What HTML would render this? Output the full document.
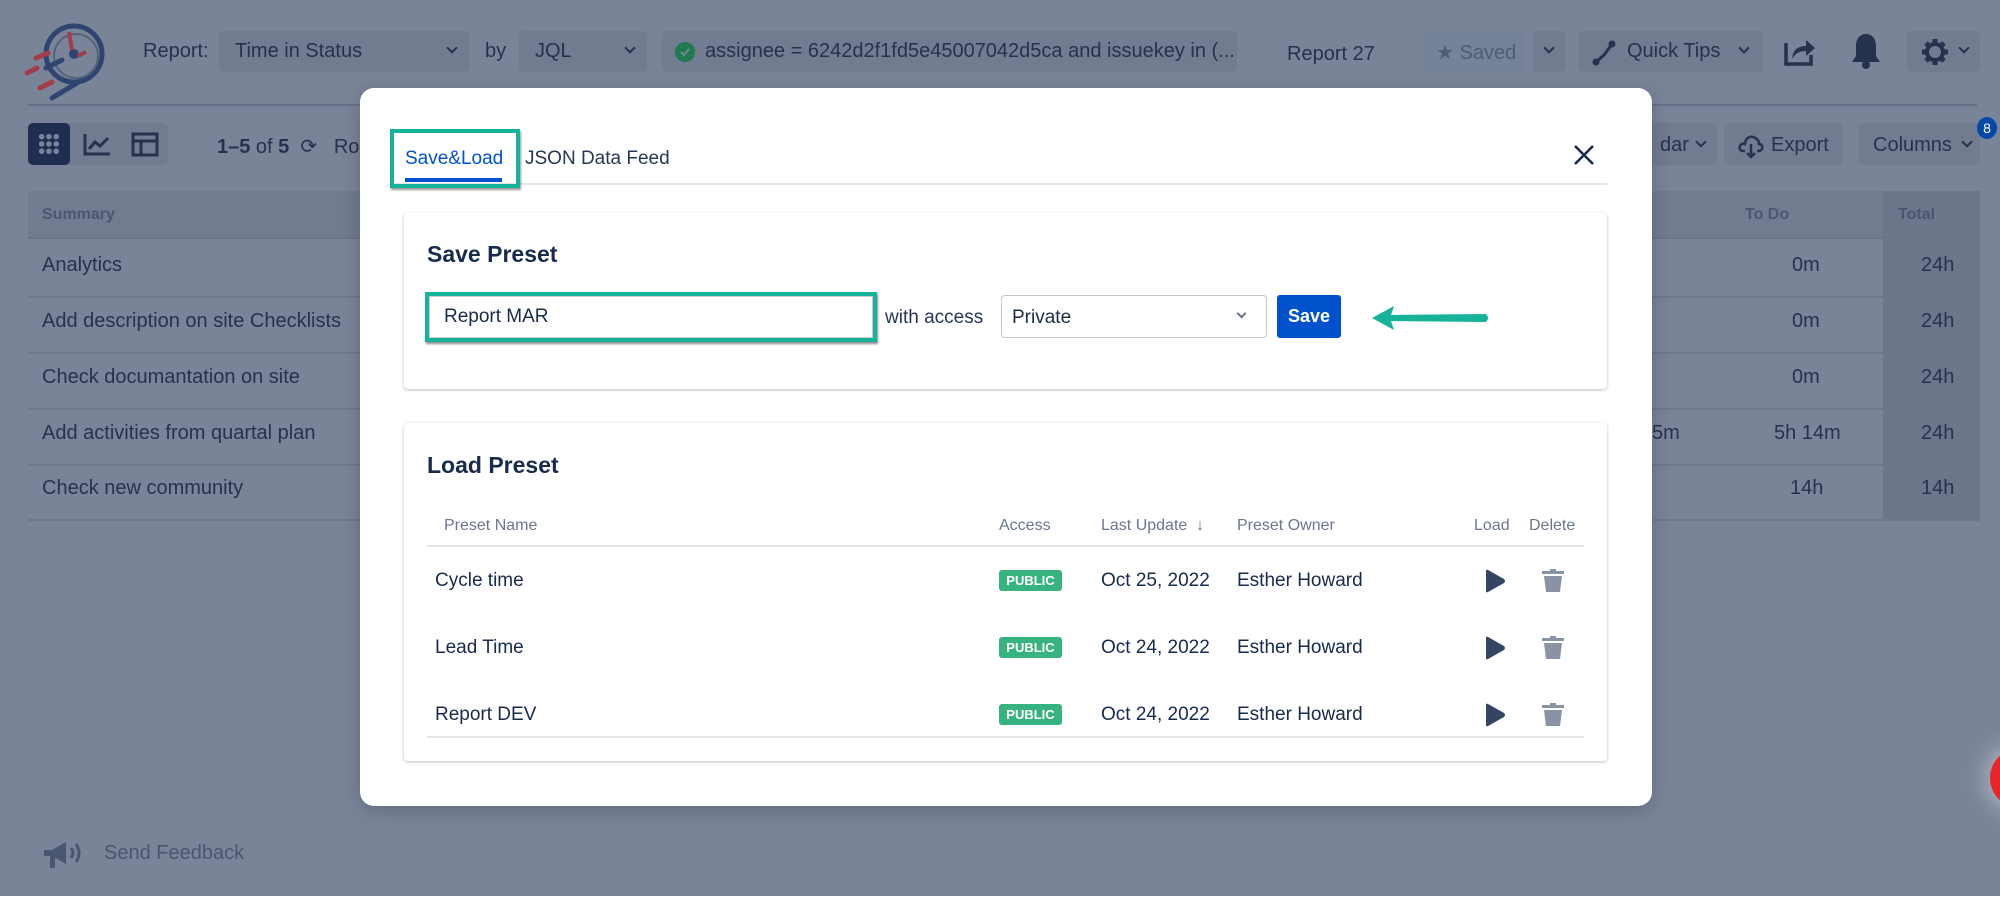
<!DOCTYPE html>
<html><head><meta charset="utf-8">
<style>
*{box-sizing:border-box;margin:0;padding:0}
body{width:2000px;height:903px;overflow:hidden;background:#fff;font-family:"Liberation Sans",Arial,sans-serif;position:relative}
.bg{position:absolute;left:0;top:0;width:2000px;height:896px;background:#7a8499}
.a{position:absolute}
.t{color:#25314d;font-size:20px;white-space:nowrap}
.box{position:absolute;background:#717c91;border-radius:5px}
.chev{display:inline-block;width:8px;height:8px;border-right:2.5px solid #25314d;border-bottom:2.5px solid #25314d;transform:rotate(45deg)}
.modal{position:absolute;left:360px;top:88px;width:1292px;height:718px;background:#fff;border-radius:14px;box-shadow:0 4px 20px rgba(0,0,0,.2)}
.card{position:absolute;background:#fff;border-radius:4px;box-shadow:0 1px 3px rgba(0,0,0,.25)}
.m{position:absolute;color:#172b4d;white-space:nowrap}
.hd{position:absolute;color:#6b778c;font-size:16px;white-space:nowrap}
.badge{position:absolute;left:639px;width:63px;height:21px;background:#36b37e;color:#fff;font-size:13px;font-weight:bold;border-radius:3px;text-align:center;line-height:21px}
</style></head><body>
<div class="bg"></div>
<svg class="a" style="left:22px;top:18px" width="85" height="85" viewBox="0 0 85 85">
<circle cx="52" cy="36" r="28" fill="none" stroke="#2f4470" stroke-width="5"/>
<circle cx="54" cy="38" r="22" fill="none" stroke="#55627a" stroke-width="2"/>
<circle cx="52" cy="36" r="5" fill="#2f4470"/>
<line x1="50" y1="32" x2="47" y2="14" stroke="#a33c4a" stroke-width="4"/>
<line x1="56" y1="38" x2="64" y2="34" stroke="#a33c4a" stroke-width="4"/>
<line x1="5" y1="55" x2="15" y2="50" stroke="#a33c4a" stroke-width="5" stroke-linecap="round"/>
<line x1="14" y1="40" x2="26" y2="35" stroke="#a33c4a" stroke-width="5" stroke-linecap="round"/>
<line x1="18" y1="70" x2="30" y2="64" stroke="#a33c4a" stroke-width="5" stroke-linecap="round"/>
<line x1="24" y1="50" x2="40" y2="42" stroke="#2f4470" stroke-width="5" stroke-linecap="round"/>
<line x1="30" y1="80" x2="55" y2="65" stroke="#2f4470" stroke-width="5" stroke-linecap="round"/>
</svg>
<div class="a t" style="left:143px;top:40px">Report:</div>
<div class="box" style="left:219px;top:31px;width:251px;height:41px"></div>
<div class="a t" style="left:235px;top:40px">Time in Status</div>
<div class="a chev" style="left:448px;top:44px"></div>
<div class="a t" style="left:485px;top:40px">by</div>
<div class="box" style="left:519px;top:31px;width:128px;height:41px"></div>
<div class="a t" style="left:535px;top:40px">JQL</div>
<div class="a chev" style="left:626px;top:44px"></div>
<div class="box" style="left:662px;top:31px;width:575px;height:41px"></div>
<svg class="a" style="left:675px;top:42px" width="20" height="20"><circle cx="10" cy="10" r="10" fill="#1f7a4f"/><path d="M6 10 L9 13 L14 7" stroke="#7a8499" stroke-width="2" fill="none"/></svg>
<div class="a t" style="left:705px;top:40px">assignee = 6242d2f1fd5e45007042d5ca and issuekey in (...</div>
<div class="a t" style="left:1287px;top:43px">Report 27</div>
<div class="box" style="left:1422px;top:31px;width:102px;height:41px;background:#76819a"></div>
<div class="a t" style="left:1436px;top:40px;color:#4f5b74">★ Saved</div>
<div class="box" style="left:1533px;top:31px;width:33px;height:41px"></div>
<div class="a chev" style="left:1545px;top:44px"></div>
<div class="box" style="left:1578px;top:31px;width:185px;height:41px"></div>
<svg class="a" style="left:1592px;top:38px" width="26" height="28"><path d="M4 24 L12 17 L20 6" stroke="#25314d" stroke-width="3" fill="none"/><circle cx="4" cy="24" r="3.5" fill="#25314d"/><circle cx="20" cy="6" r="3.5" fill="#25314d"/></svg>
<div class="a t" style="left:1627px;top:40px">Quick Tips</div>
<div class="a chev" style="left:1740px;top:44px"></div>
<svg class="a" style="left:1783px;top:35px" width="34" height="32"><path d="M3 8 V29 H28 V20" stroke="#25314d" stroke-width="3.5" fill="none"/><path d="M9 24 C10 14 16 11 23 11 V5 L32 13 L23 21 V16 C17 16 12 18 9 24Z" fill="#25314d"/></svg>
<svg class="a" style="left:1850px;top:32px" width="32" height="40"><path d="M16 2 C9 2 6 8 6 14 V24 L2 30 H30 L26 24 V14 C26 8 23 2 16 2Z" fill="#25314d"/><circle cx="16" cy="33" r="4" fill="#25314d"/></svg>
<div class="box" style="left:1907px;top:31px;width:73px;height:41px"></div>
<svg class="a" style="left:1921px;top:38px" width="28" height="28" viewBox="0 0 28 28"><circle cx="14" cy="14" r="8" fill="none" stroke="#25314d" stroke-width="4"/><g stroke="#25314d" stroke-width="5"><line x1="14" y1="1" x2="14" y2="6"/><line x1="14" y1="22" x2="14" y2="27"/><line x1="1" y1="14" x2="6" y2="14"/><line x1="22" y1="14" x2="27" y2="14"/><line x1="5" y1="5" x2="8" y2="8"/><line x1="20" y1="20" x2="23" y2="23"/><line x1="5" y1="23" x2="8" y2="20"/><line x1="20" y1="8" x2="23" y2="5"/></g></svg>
<div class="a chev" style="left:1960px;top:44px"></div>
<div class="a" style="left:28px;top:104px;width:1949px;height:2px;background:#66718a"></div>
<div class="box" style="left:28px;top:123px;width:140px;height:42px"></div>
<div class="a" style="left:28px;top:123px;width:42px;height:42px;background:#1e2d50;border-radius:5px"></div>
<div class="a" style="left:38px;top:133px;width:22px;height:22px;background:radial-gradient(circle,#7a8499 2.5px,transparent 3px) 0 0/7.3px 7.3px"></div>
<svg class="a" style="left:83px;top:132px" width="28" height="24"><path d="M2 2 V22 H27 M6 17 L12 10 L17 14 L25 6" stroke="#25314d" stroke-width="3" fill="none"/></svg>
<svg class="a" style="left:131px;top:132px" width="28" height="25"><rect x="2" y="2" width="24" height="21" stroke="#25314d" stroke-width="3" fill="none"/><path d="M2 9 H26 M10 9 V23" stroke="#25314d" stroke-width="3"/></svg>
<div class="a t" style="left:217px;top:134px"><b>1–5</b> of <b>5</b> &nbsp;⟳ &nbsp;&nbsp;Ro</div>
<div class="box" style="left:1650px;top:123px;width:67px;height:42px"></div>
<div class="a t" style="left:1660px;top:134px">dar</div>
<div class="a chev" style="left:1697px;top:138px"></div>
<div class="box" style="left:1724px;top:123px;width:119px;height:42px"></div>
<svg class="a" style="left:1738px;top:133px" width="26" height="26"><path d="M7 18 H5 C2 18 1 15 2 13 C3 11 5 10 7 11 C7 6 11 3 15 4 C19 5 21 8 21 11 C24 11 25 14 24 16 C23 18 21 18 19 18" stroke="#25314d" stroke-width="2.5" fill="none"/><path d="M13 11 V24 M9 20 L13 24 L17 20" stroke="#25314d" stroke-width="2.5" fill="none"/></svg>
<div class="a t" style="left:1771px;top:134px">Export</div>
<div class="box" style="left:1858px;top:123px;width:122px;height:42px"></div>
<div class="a t" style="left:1873px;top:134px">Columns</div>
<div class="a chev" style="left:1963px;top:138px"></div>
<div class="a" style="left:1977px;top:117px;width:20px;height:22px;border-radius:50%;background:#0747a6;color:#fff;font-size:14px;text-align:center;line-height:22px">8</div>
<div class="a" style="left:28px;top:191px;width:1855px;height:48px;background:#717c91;border-bottom:2px solid #6a7589"></div>
<div class="a" style="left:1883px;top:191px;width:97px;height:329px;background:#6b768b"></div>
<div class="a t" style="left:42px;top:206px;font-size:16px;font-weight:bold;color:#4a5670">Summary</div>
<div class="a t" style="left:1745px;top:206px;font-size:16px;font-weight:bold;color:#4a5670">To Do</div>
<div class="a t" style="left:1898px;top:206px;font-size:16px;font-weight:bold;color:#4a5670">Total</div>
<div class="a" style="left:28px;top:296px;width:1855px;height:2px;background:#6d788d"></div>
<div class="a" style="left:28px;top:352px;width:1855px;height:2px;background:#6d788d"></div>
<div class="a" style="left:28px;top:408px;width:1855px;height:2px;background:#6d788d"></div>
<div class="a" style="left:28px;top:464px;width:1855px;height:2px;background:#6d788d"></div>
<div class="a" style="left:28px;top:519px;width:1952px;height:2px;background:#6d788d"></div>
<div class="a t" style="left:42px;top:254px">Analytics</div>
<div class="a t" style="left:42px;top:310px">Add description on site Checklists</div>
<div class="a t" style="left:42px;top:366px">Check documantation on site</div>
<div class="a t" style="left:42px;top:422px">Add activities from quartal plan</div>
<div class="a t" style="left:42px;top:477px">Check new community</div>
<div class="a t" style="left:1792px;top:254px">0m</div>
<div class="a t" style="left:1792px;top:310px">0m</div>
<div class="a t" style="left:1792px;top:366px">0m</div>
<div class="a t" style="left:1774px;top:422px">5h 14m</div>
<div class="a t" style="left:1790px;top:477px">14h</div>
<div class="a t" style="left:1652px;top:422px">5m</div>
<div class="a t" style="left:1921px;top:254px">24h</div>
<div class="a t" style="left:1921px;top:310px">24h</div>
<div class="a t" style="left:1921px;top:366px">24h</div>
<div class="a t" style="left:1921px;top:422px">24h</div>
<div class="a t" style="left:1921px;top:477px">14h</div>
<div class="a" style="left:1990px;top:748px;width:60px;height:60px;border-radius:50%;background:#e8262a;box-shadow:0 0 20px 6px rgba(255,255,255,.35)"></div>
<svg class="a" style="left:42px;top:838px" width="48" height="32"><path d="M2 12 H10 L24 4 V26 L10 18 H2Z" fill="#4a5670"/><rect x="8" y="18" width="5" height="12" fill="#4a5670"/><path d="M29 10 Q33 15 29 20 M34 6 Q40 15 34 24" stroke="#4a5670" stroke-width="3" fill="none"/></svg>
<div class="a t" style="left:104px;top:842px;color:#4a5670">Send Feedback</div>

<div class="modal">
 <div class="a" style="left:30px;top:95px;width:1217px;height:2px;background:#e4e6ea"></div>
 <div class="a" style="left:30px;top:41px;width:130px;height:59px;border:4px solid #16b29a;box-shadow:1px 2px 2px rgba(0,0,0,.4)"></div>
 <div class="m" style="left:45px;top:60px;font-size:19px;color:#0052cc">Save&amp;Load</div>
 <div class="a" style="left:45px;top:90px;width:97px;height:4px;background:#0052cc"></div>
 <div class="m" style="left:165px;top:60px;font-size:19px;color:#253858">JSON Data Feed</div>
 <svg class="a" style="left:1213px;top:56px" width="22" height="22"><path d="M2 2 L20 20 M20 2 L2 20" stroke="#172b4d" stroke-width="2.6"/></svg>

 <div class="card" style="left:44px;top:125px;width:1203px;height:176px"></div>
 <div class="m" style="left:67px;top:153px;font-size:23px;font-weight:bold">Save Preset</div>
 <div class="a" style="left:65px;top:204px;width:452px;height:50px;border:4px solid #16b29a;box-shadow:1px 2px 2px rgba(0,0,0,.45)"><div style="position:absolute;left:0;top:0;right:0;bottom:0;border:1px solid #ccc"></div></div>
 <div class="m" style="left:84px;top:218px;font-size:19px">Report MAR</div>
 <div class="m" style="left:525px;top:219px;font-size:19px;color:#253858">with access</div>
 <div class="a" style="left:641px;top:207px;width:266px;height:43px;border:1px solid #c1c7d0;border-radius:4px"></div>
 <div class="m" style="left:652px;top:219px;font-size:19px">Private</div>
 <div class="a" style="left:878px;top:222px;width:7px;height:7px;border-right:2px solid #6b778c;border-bottom:2px solid #6b778c;transform:rotate(45deg)"></div>
 <div class="a" style="left:917px;top:207px;width:64px;height:43px;background:#0052cc;border-radius:3px;color:#fff;font-size:18px;font-weight:bold;text-align:center;line-height:43px">Save</div>
 <svg class="a" style="left:1008px;top:215px" width="125" height="30"><path d="M4 15 L26 3 L23 12 L118 11 Q122 15 118 19 L23 18 L26 27Z" fill="#16b29a"/></svg>

 <div class="card" style="left:44px;top:335px;width:1203px;height:338px"></div>
 <div class="m" style="left:67px;top:364px;font-size:23px;font-weight:bold">Load Preset</div>
 <div class="hd" style="left:84px;top:429px">Preset Name</div>
 <div class="hd" style="left:639px;top:429px">Access</div>
 <div class="hd" style="left:741px;top:429px">Last Update &nbsp;↓</div>
 <div class="hd" style="left:877px;top:429px">Preset Owner</div>
 <div class="hd" style="left:1114px;top:429px">Load</div>
 <div class="hd" style="left:1169px;top:429px">Delete</div>
 <div class="a" style="left:67px;top:457px;width:1157px;height:2px;background:#e4e6ea"></div>
 <div class="a" style="left:67px;top:648px;width:1157px;height:2px;background:#e4e6ea"></div>

 <div class="m" style="left:75px;top:482px;font-size:19px">Cycle time</div>
 <div class="badge" style="top:482px">PUBLIC</div>
 <div class="m" style="left:741px;top:482px;font-size:19px">Oct 25, 2022</div>
 <div class="m" style="left:877px;top:482px;font-size:19px">Esther Howard</div>

 <div class="m" style="left:75px;top:549px;font-size:19px">Lead Time</div>
 <div class="badge" style="top:549px">PUBLIC</div>
 <div class="m" style="left:741px;top:549px;font-size:19px">Oct 24, 2022</div>
 <div class="m" style="left:877px;top:549px;font-size:19px">Esther Howard</div>

 <div class="m" style="left:75px;top:616px;font-size:19px">Report DEV</div>
 <div class="badge" style="top:616px">PUBLIC</div>
 <div class="m" style="left:741px;top:616px;font-size:19px">Oct 24, 2022</div>
 <div class="m" style="left:877px;top:616px;font-size:19px">Esther Howard</div>

 <svg class="a" style="left:1124px;top:480px" width="24" height="26"><path d="M2 3 Q2 1 4 2 L20 11 Q22 13 20 15 L4 24 Q2 25 2 23Z" fill="#344563"/></svg>
 <svg class="a" style="left:1124px;top:547px" width="24" height="26"><path d="M2 3 Q2 1 4 2 L20 11 Q22 13 20 15 L4 24 Q2 25 2 23Z" fill="#344563"/></svg>
 <svg class="a" style="left:1124px;top:614px" width="24" height="26"><path d="M2 3 Q2 1 4 2 L20 11 Q22 13 20 15 L4 24 Q2 25 2 23Z" fill="#344563"/></svg>
 <svg class="a" style="left:1181px;top:480px" width="24" height="25"><path d="M9 1 H15 V3 H23 V6 H1 V3 H9Z M3 8 H21 L19 24 H5Z" fill="#8993a4"/></svg>
 <svg class="a" style="left:1181px;top:547px" width="24" height="25"><path d="M9 1 H15 V3 H23 V6 H1 V3 H9Z M3 8 H21 L19 24 H5Z" fill="#8993a4"/></svg>
 <svg class="a" style="left:1181px;top:614px" width="24" height="25"><path d="M9 1 H15 V3 H23 V6 H1 V3 H9Z M3 8 H21 L19 24 H5Z" fill="#8993a4"/></svg>
</div>
</body></html>
